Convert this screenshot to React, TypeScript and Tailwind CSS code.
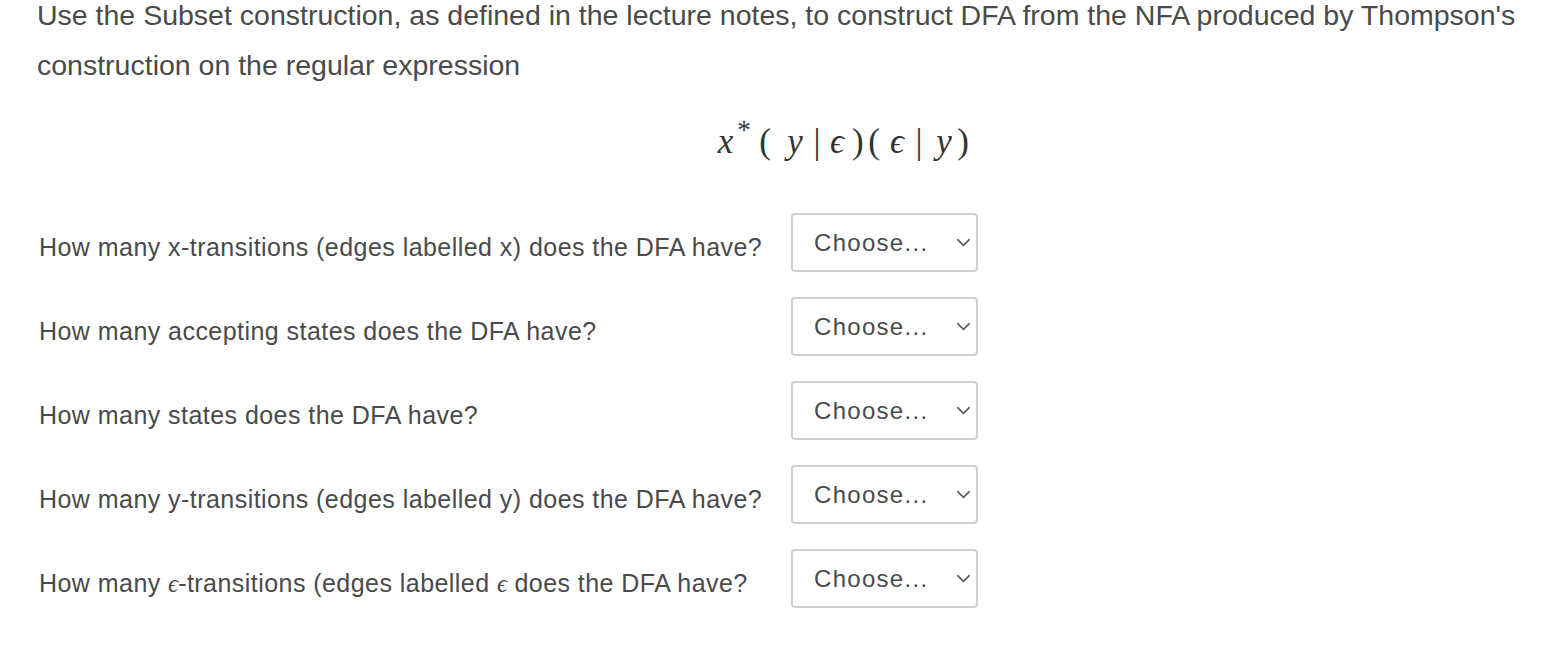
import { ChevronDown } from "lucide-react";

function M({ children }: { children: React.ReactNode }) {
  return <span className="font-['Liberation_Serif',serif] italic tracking-normal">{children}</span>;
}

const questions = [
  <>How many x-transitions (edges labelled x) does the DFA have?</>,
  <>How many accepting states does the DFA have?</>,
  <>How many states does the DFA have?</>,
  <>How many y-transitions (edges labelled y) does the DFA have?</>,
  <>
    How many <M>ϵ</M>-transitions (edges labelled <M>ϵ</M> does the DFA have?
  </>,
];

// glyphs of x* ( y | ϵ ) ( ϵ | y ), each in a fixed-width box
const formula: { ch: string; w: string; italic?: boolean; sup?: boolean }[] = [
  { ch: "x", w: "w-[21px]", italic: true },
  { ch: "*", w: "w-[16px]", sup: true },
  { ch: "(", w: "w-[26px]" },
  { ch: "y", w: "w-[34px]", italic: true },
  { ch: "|", w: "w-[10px]" },
  { ch: "ϵ", w: "w-[30px]", italic: true },
  { ch: ")", w: "w-[8px]" },
  { ch: "(", w: "w-[28px]" },
  { ch: "ϵ", w: "w-[18px]", italic: true },
  { ch: "|", w: "w-[26px]" },
  { ch: "y", w: "w-[24px]", italic: true },
  { ch: ")", w: "w-[14px]" },
];

function ChooseSelect() {
  return (
    <div className="flex h-[59px] w-[187px] items-center justify-between rounded-[4px] border-2 border-[#d0d0d0] bg-white pl-[21px] pr-[1px]">
      <span className="text-[24px] tracking-[1.3px] text-[#4a4a4a]">Choose...</span>
      <ChevronDown className="h-[23px] w-[23px] text-[#555]" strokeWidth={1.5} />
    </div>
  );
}

export default function App() {
  return (
    <div className="min-h-[646px] overflow-hidden bg-white pl-[37px] font-['Liberation_Sans',Arial,sans-serif] text-[#4a4a4a]">
      <p className="-mt-[10px] text-[28.5px] leading-[50px]">
        Use the Subset construction, as defined in the lecture notes, to construct DFA from the NFA produced by
        Thompson's construction on the regular expression
      </p>

      <div className="ml-[678px] mt-[27px] whitespace-nowrap font-['Liberation_Serif',serif] text-[35px] leading-[40px] text-[#333]">
        {formula.map((g, i) => (
          <span
            key={i}
            className={`inline-block text-center ${g.w} ${g.italic ? "italic" : ""} ${
              g.sup ? "align-[14px] text-[27px] leading-none" : ""
            }`}
          >
            {g.ch}
          </span>
        ))}
      </div>

      <div className="mt-[51px] flex flex-col gap-[25px] pl-[2px]">
        {questions.map((q, i) => (
          <div key={i} className="grid grid-cols-[752px_187px] items-center">
            <span className="pt-[10px] text-[25px] tracking-[0.45px]">{q}</span>
            <ChooseSelect />
          </div>
        ))}
      </div>
    </div>
  );
}
